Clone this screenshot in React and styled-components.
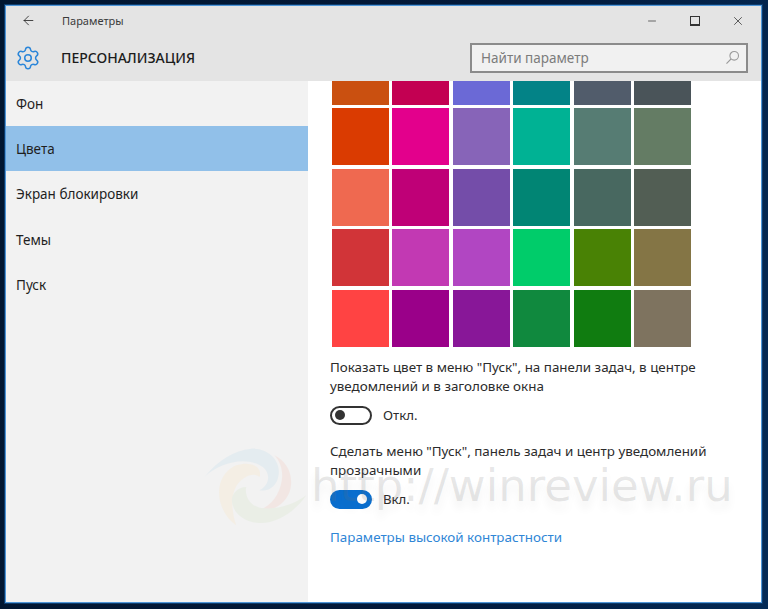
import styled, { createGlobalStyle } from "styled-components";
import { ArrowLeft, Settings, Minus, X } from "lucide-react";

const GlobalStyle = createGlobalStyle`
  html, body {
    margin: 0;
    padding: 0;
    height: 100%;
  }
  body {
    font-family: "Noto Sans", "Open Sans", sans-serif;
    background: #021a3a;
    overflow: hidden;
  }
  * {
    box-sizing: border-box;
  }
`;

const Desktop = styled.div`
  width: 768px;
  height: 609px;
  padding: 5px 6px 6px 5px;
  background: linear-gradient(100deg, #011630 0%, #02193a 60%, #032a56 100%);
`;

const Window = styled.div`
  position: relative;
  width: 100%;
  height: 100%;
  border: 1px solid #4f96d8;
  box-shadow: 0 0 0 1px #0b3a6b;
  display: flex;
  flex-direction: column;
  background: #ffffff;
  overflow: hidden;
`;

const Header = styled.header`
  height: 75px;
  flex-shrink: 0;
  background: #e4e4e4;
  display: flex;
  flex-direction: column;
`;

const TitleBar = styled.div`
  height: 31px;
  display: flex;
  align-items: center;
  padding: 0 0 2px 15px;
  color: #333;
`;

const AppName = styled.span`
  margin-left: 26px;
  font-size: 11px;
  color: #3a3a3a;
`;

const WindowButtons = styled.div`
  margin-left: auto;
  display: flex;
  align-items: center;
  gap: 21px;
  padding-right: 12px;
`;

const ButtonSlot = styled.span`
  width: 22px;
  height: 22px;
  display: flex;
  align-items: center;
  justify-content: center;
`;

const MaxIcon = styled.span`
  width: 10px;
  height: 10px;
  border: 1px solid #333;
  border-bottom-width: 2px;
`;

const SectionBar = styled.div`
  flex: 1;
  display: flex;
  align-items: center;
  padding: 0 13px 3px 9px;
`;

const SectionTitle = styled.h1`
  margin: 0 0 0 20px;
  font-size: 14px;
  font-weight: 500;
  color: #1c1c1c;
  letter-spacing: 0;
`;

const SearchBox = styled.div`
  margin-left: auto;
  width: 278px;
  height: 30px;
  border: 2px solid #8b8b8b;
  background: #f1f1f1;
  display: flex;
  align-items: center;
  justify-content: space-between;
  padding: 0 6px 0 9px;
  font-size: 13.5px;
  color: #7c7c7c;
`;

const Body = styled.div`
  flex: 1;
  min-height: 0;
  display: flex;
`;

const Sidebar = styled.nav`
  width: 302px;
  flex-shrink: 0;
  background: #f2f2f2;
`;

const NavItem = styled.div`
  height: 45.2px;
  display: flex;
  align-items: center;
  padding: 1px 0 0 10px;
  font-size: 13.5px;
  color: #1f1f1f;
  background: ${(props) => (props.$active ? "#91c0e9" : "transparent")};
`;

const Content = styled.main`
  flex: 1;
  min-width: 0;
  overflow: hidden;
  padding-left: 22px;
`;

const Swatches = styled.div`
  margin: -33px 0 0 2px;
  display: grid;
  grid-template-columns: repeat(6, 57px);
  grid-auto-rows: 57px;
  gap: 3.4px;
`;

const Swatch = styled.div`
  background: ${(props) => props.$color};
`;

const OptionText = styled.p`
  margin: ${(props) => (props.$first ? "11px" : "17px")} 0 0;
  width: 400px;
  font-size: 13.4px;
  line-height: 19px;
  color: #2b2b2b;
`;

const ToggleRow = styled.div`
  margin-top: 10px;
  display: flex;
  align-items: center;
  gap: 11px;
  font-size: 13.2px;
  color: #2b2b2b;
`;

const Toggle = styled.span`
  width: 42px;
  height: 19px;
  border-radius: 10px;
  border: 2px solid ${(props) => (props.$on ? "#0a6fd0" : "#333")};
  background: ${(props) => (props.$on ? "#0a6fd0" : "transparent")};
  display: flex;
  align-items: center;
  justify-content: ${(props) => (props.$on ? "flex-end" : "flex-start")};
  padding: 0 3px;

  &::after {
    content: "";
    width: 10px;
    height: 10px;
    border-radius: 50%;
    background: ${(props) => (props.$on ? "#fff" : "#333")};
  }
`;

const ContrastLink = styled.a`
  display: block;
  margin-top: 19px;
  font-size: 13.4px;
  line-height: 19px;
  color: #2f86d6;
`;

const Watermark = styled.div`
  position: absolute;
  left: 195px;
  top: 441px;
  display: flex;
  align-items: center;
  pointer-events: none;
`;

const WatermarkText = styled.span`
  margin-left: 3px;
  padding-bottom: 4px;
  font-family: "DejaVu Sans", sans-serif;
  font-size: 45px;
  color: rgba(110, 110, 110, 0.16);
  text-shadow: 0 8px 9px rgba(0, 0, 0, 0.05);
`;

const colors = [
  "#ca5010", "#c30052", "#6b69d6", "#038387", "#515c6b", "#4a5459",
  "#da3b01", "#e3008c", "#8764b8", "#00b294", "#567c73", "#647c64",
  "#ef6950", "#bf0077", "#744da9", "#018574", "#486860", "#525e54",
  "#d13438", "#c239b3", "#b146c2", "#00cc6a", "#498205", "#847545",
  "#ff4343", "#9a0089", "#881798", "#10893e", "#107c10", "#7e735f",
];

const navItems = ["Фон", "Цвета", "Экран блокировки", "Темы", "Пуск"];

const SearchIcon = () => (
  <svg width="15" height="15" viewBox="0 0 15 15" fill="none" stroke="#9a9a9a" strokeWidth="1.1">
    <circle cx="9.2" cy="5.8" r="4.3" />
    <path d="M6 9 L1.5 13.6" />
  </svg>
);

const SwirlLogo = () => (
  <svg width="107" height="80" viewBox="30 50 320 240">
    <g opacity="0.5">
      <path d="M40 140 C80 90 130 60 180 55 C230 52 270 90 262 135 C258 165 235 185 205 180 C235 165 240 130 215 110 C180 85 130 90 95 105 C75 113 55 125 40 140 Z" fill="#d8e7ef" />
      <path d="M250 75 C290 95 310 140 295 185 C280 225 240 245 205 240 C240 225 265 195 272 150 C276 120 268 95 250 75 Z" fill="#f3dcd6" />
      <path d="M135 105 C180 90 215 110 205 140 C190 125 160 135 140 160 C118 190 120 240 135 285 C100 260 78 215 85 170 C90 140 110 115 135 105 Z" fill="#f6ecd8" />
      <path d="M165 170 C160 195 175 225 205 232 C255 240 305 225 345 195 C315 240 260 280 205 278 C160 276 125 250 122 210 C122 190 140 170 165 170 Z" fill="#e3ecdc" />
    </g>
  </svg>
);

const App = () => {
  return (
    <>
      <GlobalStyle />
      <Desktop>
        <Window>
          <Header>
            <TitleBar>
              <ArrowLeft size={15} strokeWidth={1.3} color="#222" />
              <AppName>Параметры</AppName>
              <WindowButtons>
                <ButtonSlot>
                  <Minus size={12} strokeWidth={1.3} color="#222" />
                </ButtonSlot>
                <ButtonSlot>
                  <MaxIcon />
                </ButtonSlot>
                <ButtonSlot>
                  <X size={14} strokeWidth={1.2} color="#222" />
                </ButtonSlot>
              </WindowButtons>
            </TitleBar>
            <SectionBar>
              <Settings size={26} strokeWidth={1.4} color="#2b86d9" />
              <SectionTitle>ПЕРСОНАЛИЗАЦИЯ</SectionTitle>
              <SearchBox>
                <span>Найти параметр</span>
                <SearchIcon />
              </SearchBox>
            </SectionBar>
          </Header>
          <Body>
            <Sidebar>
              {navItems.map((item, index) => (
                <NavItem key={index} $active={item === "Цвета"}>
                  {item}
                </NavItem>
              ))}
            </Sidebar>
            <Content>
              <Swatches>
                {colors.map((color, index) => (
                  <Swatch key={index} $color={color} />
                ))}
              </Swatches>
              <OptionText $first>
                Показать цвет в меню "Пуск", на панели задач, в центре уведомлений и в заголовке окна
              </OptionText>
              <ToggleRow>
                <Toggle />
                Откл.
              </ToggleRow>
              <OptionText>
                Сделать меню "Пуск", панель задач и центр уведомлений прозрачными
              </OptionText>
              <ToggleRow>
                <Toggle $on />
                Вкл.
              </ToggleRow>
              <ContrastLink>Параметры высокой контрастности</ContrastLink>
            </Content>
          </Body>
          <Watermark>
            <SwirlLogo />
            <WatermarkText>http://winreview.ru</WatermarkText>
          </Watermark>
        </Window>
      </Desktop>
    </>
  );
};

export default App;
